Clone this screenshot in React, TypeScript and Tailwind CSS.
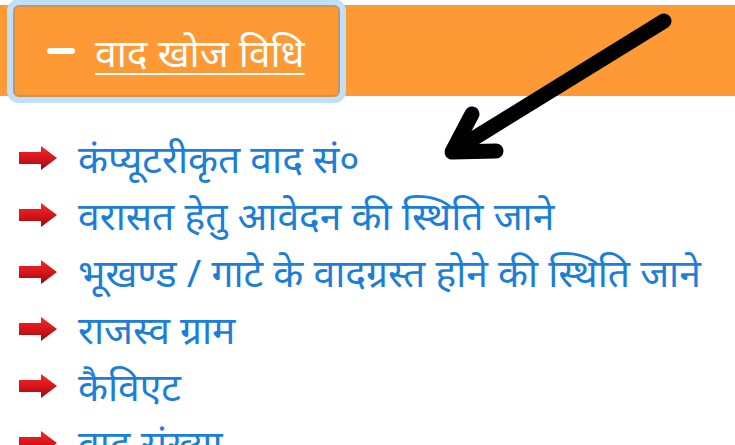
import React from 'react';

const items = [
  'कंप्यूटरीकृत वाद सं०',
  'वरासत हेतु आवेदन की स्थिति जाने',
  'भूखण्ड / गाटे के वादग्रस्त होने की स्थिति जाने',
  'राजस्व ग्राम',
  'कैविएट',
  'वाद संख्या',
];

const RedArrow = () => (
  <svg width="40" height="26" viewBox="0 0 40 26" className="shrink-0">
    <defs>
      <linearGradient id="ra" x1="0" y1="0" x2="0" y2="1">
        <stop offset="0" stopColor="#f2292b" />
        <stop offset="0.55" stopColor="#d4141a" />
        <stop offset="1" stopColor="#8e0a0e" />
      </linearGradient>
    </defs>
    <path d="M1 7 H23 V1 L39 13 L23 25 V19 H1 Z" fill="url(#ra)" />
  </svg>
);

const App = () => {
  return (
    <div className="relative w-[735px] h-[445px] overflow-hidden bg-white" style={{ fontFamily: '"Noto Sans", "Noto Sans Devanagari", Lohit, sans-serif' }}>
      {/* header bar */}
      <div className="pt-[4px]">
        <div className="h-[91px] bg-[#fd9a35] pl-[13px]">
          <div className="h-[92px] w-[327px] mt-[1px] rounded-md bg-[#fd9a35] border-2 border-[#c9935a] ring-[6px] ring-[#bfe0f8] flex items-center pl-[32px] gap-[20px]">
            <span className="block w-[28px] h-[6px] rounded-sm bg-white" />
            <span className="text-white text-[39px] underline underline-offset-[6px] decoration-2 leading-none">
              वाद खोज विधि
            </span>
          </div>
        </div>
      </div>

      {/* list */}
      <ul className="pt-[33px] pl-[18px]">
        {items.map((t) => (
          <li key={t} className="h-[57px] flex items-center gap-[20px]">
            <RedArrow />
            <span className="text-[#1b7ed8] text-[39px] leading-none whitespace-nowrap">{t}</span>
          </li>
        ))}
      </ul>

      {/* annotation arrow */}
      <svg className="absolute left-0 top-0 pointer-events-none" width="735" height="445">
        <g stroke="#000" strokeWidth="15" strokeLinecap="round" strokeLinejoin="round" fill="none">
          <line x1="664" y1="21" x2="455" y2="150" />
          <polyline points="472,114 452,152 496,151" />
        </g>
      </svg>
    </div>
  );
};

export default App;
